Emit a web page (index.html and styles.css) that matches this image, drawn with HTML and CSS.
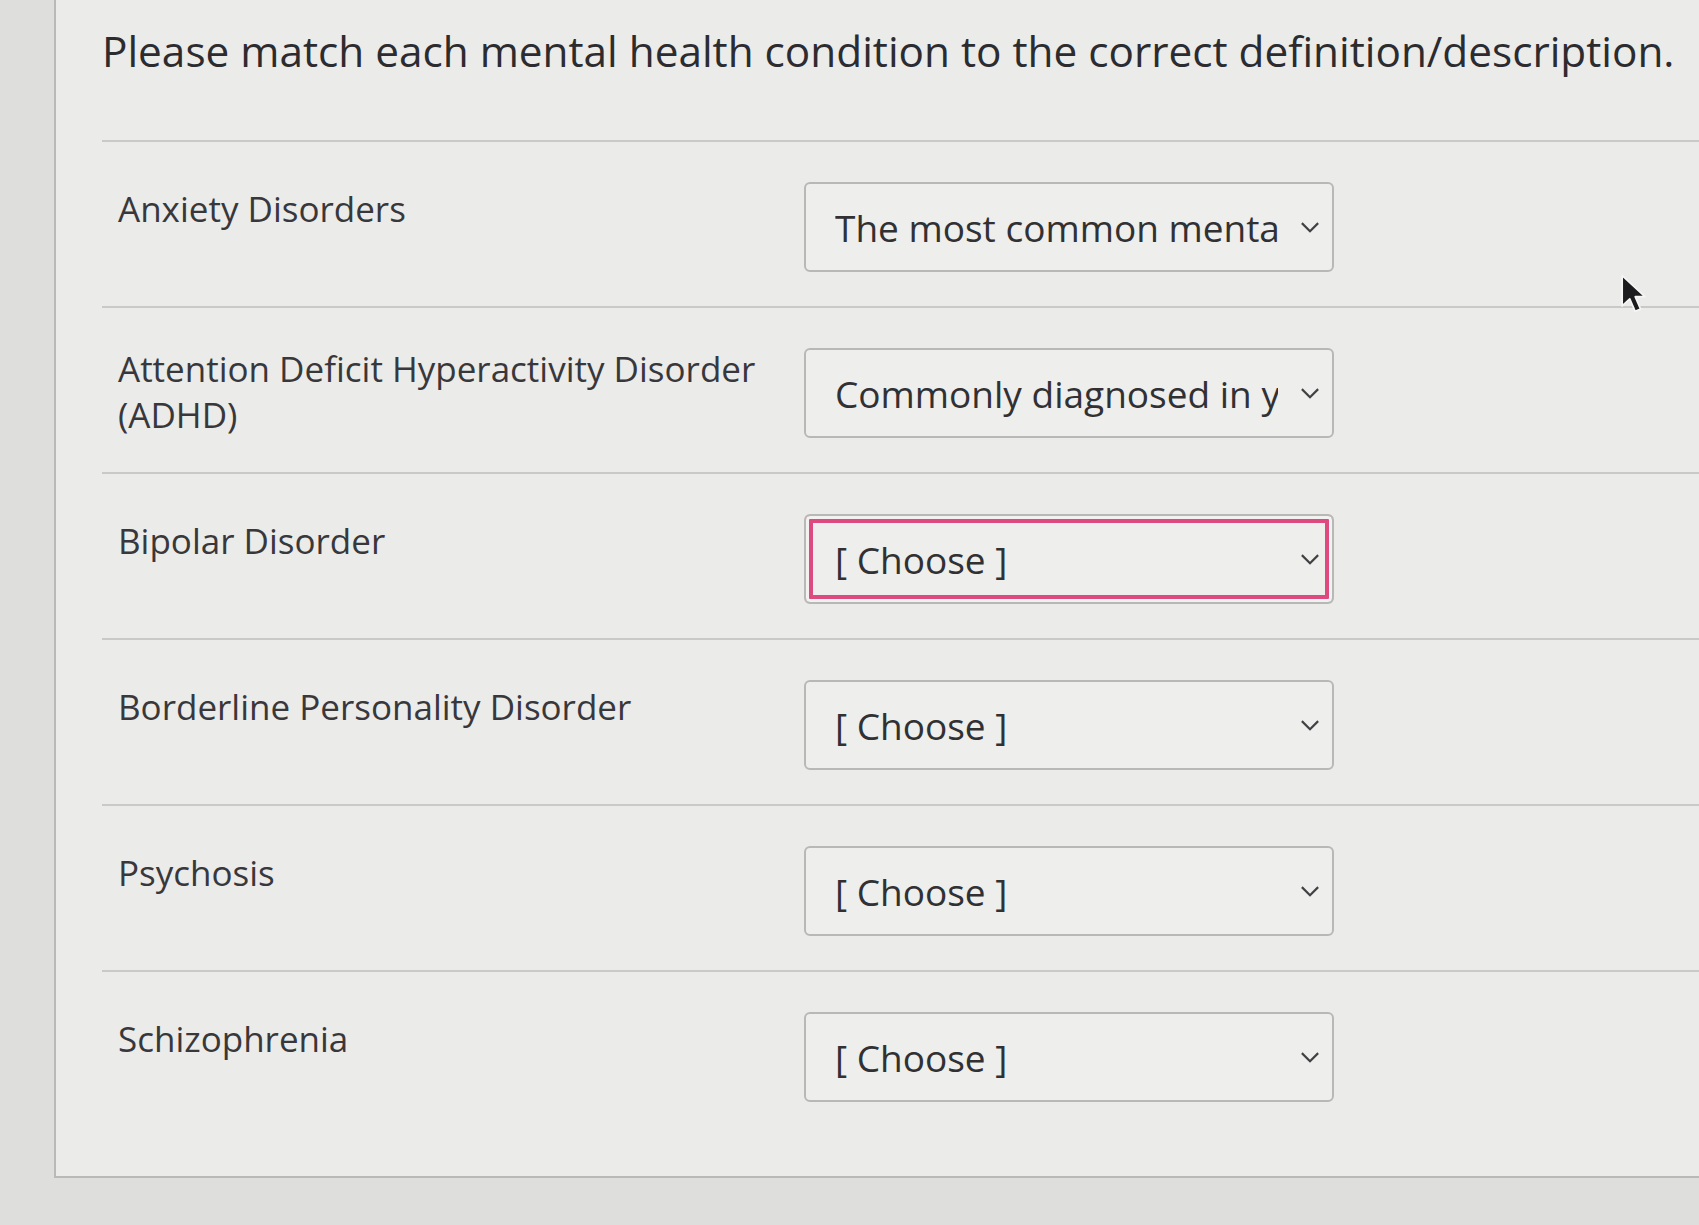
FILE: index.html
```html
<!DOCTYPE html>
<html lang="en">
<head>
    <meta charset="UTF-8">
    <meta name="viewport" content="width=device-width, initial-scale=1.0">
    <title>Matching Question</title>
    <link rel="stylesheet" href="styles.css">
</head>
<body>

<div class="panel">
    <h1 class="question-text">Please match each mental health condition to the correct definition/description.</h1>

    <div class="answers">
        <div class="match-row">
            <label class="condition" for="anxiety">Anxiety Disorders</label>
            <div class="select-wrap">
                <select id="anxiety">
                    <option>The most common mental health condition in Australia</option>
                    <option>[ Choose ]</option>
                </select>
                <svg class="chevron" viewBox="0 0 16 10"><path d="M1.5 1.5 L8 8 L14.5 1.5" /></svg>
            </div>
        </div>

        <div class="match-row">
            <label class="condition two-line" for="adhd">Attention Deficit Hyperactivity Disorder (ADHD)</label>
            <div class="select-wrap">
                <select id="adhd">
                    <option>Commonly diagnosed in young people, affects attention and impulse control</option>
                    <option>[ Choose ]</option>
                </select>
                <svg class="chevron" viewBox="0 0 16 10"><path d="M1.5 1.5 L8 8 L14.5 1.5" /></svg>
            </div>
        </div>

        <div class="match-row">
            <label class="condition" for="bipolar">Bipolar Disorder</label>
            <div class="select-wrap">
                <select id="bipolar" class="focused">
                    <option>[ Choose ]</option>
                </select>
                <svg class="chevron" viewBox="0 0 16 10"><path d="M1.5 1.5 L8 8 L14.5 1.5" /></svg>
            </div>
        </div>

        <div class="match-row">
            <label class="condition" for="borderline">Borderline Personality Disorder</label>
            <div class="select-wrap">
                <select id="borderline">
                    <option>[ Choose ]</option>
                </select>
                <svg class="chevron" viewBox="0 0 16 10"><path d="M1.5 1.5 L8 8 L14.5 1.5" /></svg>
            </div>
        </div>

        <div class="match-row">
            <label class="condition" for="psychosis">Psychosis</label>
            <div class="select-wrap">
                <select id="psychosis">
                    <option>[ Choose ]</option>
                </select>
                <svg class="chevron" viewBox="0 0 16 10"><path d="M1.5 1.5 L8 8 L14.5 1.5" /></svg>
            </div>
        </div>

        <div class="match-row">
            <label class="condition" for="schizophrenia">Schizophrenia</label>
            <div class="select-wrap">
                <select id="schizophrenia">
                    <option>[ Choose ]</option>
                </select>
                <svg class="chevron" viewBox="0 0 16 10"><path d="M1.5 1.5 L8 8 L14.5 1.5" /></svg>
            </div>
        </div>
    </div>
</div>

<!-- mouse pointer sitting over the page -->
<svg class="pointer" viewBox="0 0 24 38">
    <path d="M2 2 L2 30 L9 23.5 L14 35 L19 33 L14 21.5 L23 21.5 Z" />
</svg>

</body>
</html>
```

FILE: styles.css
```css
body {
    margin: 0;
    padding: 0;
    background-color: #dedfdd;
    font-family: 'Open Sans', 'Noto Sans', sans-serif;
    color: #3a3a3d;
    min-height: 1225px;
    position: relative;
}

.panel {
    margin-left: 54px;
    padding: 25px 0 0 46px;
    background-color: #ebebe9;
    border-left: 2px solid #b9bab8;
    border-bottom: 2px solid #b9bab8;
}

.question-text {
    margin: 0;
    padding-bottom: 63px;
    font-size: 42.3px;
    font-weight: 400;
    line-height: 52px;
    color: #2c2c30;
    white-space: nowrap;
    border-bottom: 2px solid #c9cac8;
}

.match-row {
    display: grid;
    grid-template-columns: 686px 530px;
    grid-template-rows: 90px;
    padding: 40px 0 34px 16px;
    border-bottom: 2px solid #c9cac8;
}

.match-row:last-child {
    border-bottom: none;
    padding-bottom: 74px;
}

.condition {
    margin-top: 4px;
    font-size: 35px;
    line-height: 46px;
    color: #38383c;
    padding-right: 6px;
}

.condition.two-line {
    margin-top: -2px;
}

.select-wrap {
    position: relative;
}

select {
    appearance: none;
    -webkit-appearance: none;
    width: 100%;
    height: 90px;
    margin: 0;
    padding: 0 54px 0 29px;
    font-family: 'Open Sans', 'Noto Sans', sans-serif;
    font-size: 37px;
    color: #313134;
    background-color: #eeeeec;
    border: 2px solid #b8b9b7;
    border-radius: 6px;
    outline: none;
}

select.focused {
    box-shadow: inset 0 0 0 3px #f2f2f0, inset 0 0 0 7px #dd4a80;
}

.chevron {
    position: absolute;
    right: 14px;
    top: 39px;
    width: 20px;
    height: 13px;
    fill: none;
    stroke: #414144;
    stroke-width: 1.7;
    pointer-events: none;
}

.pointer {
    position: absolute;
    left: 1620px;
    top: 273px;
    width: 26px;
    height: 42px;
}

.pointer path {
    fill: #1b1b1d;
    stroke: #f5f5f5;
    stroke-width: 1.6;
    stroke-linejoin: round;
}
```
